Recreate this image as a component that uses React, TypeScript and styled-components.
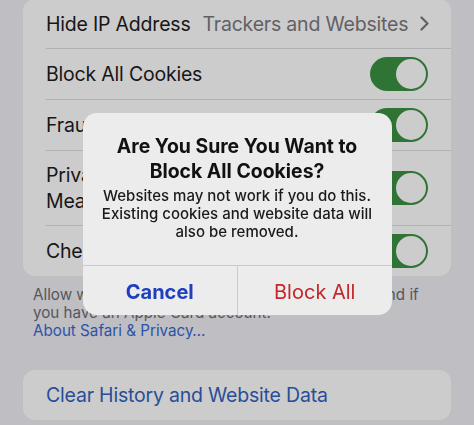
import React from 'react';
import styled, { createGlobalStyle } from 'styled-components';

const GlobalStyle = createGlobalStyle`
  body {
    margin: 0;
    background: #efeef4;
    font-family: Inter, "Liberation Sans", sans-serif;
    -webkit-font-smoothing: antialiased;
  }
`;

const Page = styled.div`
  height: 425px;
  padding: 0 23px;
  overflow: hidden;
`;

const Group = styled.div<{ $offset: number }>`
  margin-top: ${(p) => p.$offset}px;
  background: #ffffff;
  border-radius: 12px;
  overflow: hidden;
`;

const Row = styled.div`
  padding-left: 23px;
`;

const RowBody = styled.div<{ $last?: boolean; $tall?: boolean }>`
  display: flex;
  align-items: center;
  justify-content: space-between;
  gap: 12px;
  min-height: 50px;
  box-sizing: border-box;
  padding: ${(p) => (p.$tall ? '11px' : '8px')} 23px ${(p) => (p.$tall ? '11px' : '8px')} 0;
  border-bottom: ${(p) => (p.$last ? 'none' : '1px solid #dcdcdf')};
`;

const Label = styled.span<{ $tone?: 'link' }>`
  flex: none;
  font-size: 19.5px;
  line-height: 26px;
  letter-spacing: -0.2px;
  white-space: nowrap;
  color: ${(p) => (p.$tone === 'link' ? '#3462c0' : '#1c1c1e')};
`;

const Detail = styled.span`
  display: flex;
  align-items: center;
  gap: 12px;
  font-size: 19.5px;
  line-height: 26px;
  letter-spacing: -0.2px;
  color: #7a7a7e;
  white-space: nowrap;
`;

const Track = styled.span<{ $on: boolean }>`
  flex: none;
  display: flex;
  justify-content: ${(p) => (p.$on ? 'flex-end' : 'flex-start')};
  width: 58px;
  height: 34px;
  padding: 2px;
  box-sizing: border-box;
  border-radius: 17px;
  background: ${(p) => (p.$on ? '#3b9241' : '#e5e5ea')};
`;

const Knob = styled.span`
  width: 30px;
  height: 30px;
  border-radius: 50%;
  background: #ffffff;
`;

const Footer = styled.p`
  margin: 0;
  padding: 10px 10px 0;
  font-size: 15.2px;
  line-height: 18px;
  color: #6d6d72;
`;

const FooterLink = styled.span`
  display: block;
  color: #356ad2;
`;

const Backdrop = styled.div`
  position: fixed;
  inset: 0;
  display: flex;
  align-items: center;
  justify-content: center;
  padding-top: 3px;
  background: rgba(0, 0, 0, 0.2);
`;

const Alert = styled.div`
  width: 309px;
  border-radius: 14px;
  background: #ececec;
  overflow: hidden;
  text-align: center;
`;

const AlertContent = styled.div`
  padding: 21px 14px 24px;
`;

const AlertTitle = styled.h2`
  margin: 0;
  font-size: 19.4px;
  line-height: 25px;
  font-weight: 700;
  color: #111111;
`;

const AlertMessage = styled.p`
  margin: 3px 0 0;
  font-size: 15px;
  line-height: 18px;
  font-weight: 500;
  color: #1a1a1a;
`;

const Actions = styled.div`
  display: grid;
  grid-template-columns: 1fr 1fr;
  border-top: 1px solid #cacaca;
`;

const ActionButton = styled.button<{ $kind: 'cancel' | 'destructive' }>`
  height: 49px;
  padding: 2px 0 0;
  border: none;
  border-left: ${(p) => (p.$kind === 'destructive' ? '1px solid #cacaca' : 'none')};
  background: transparent;
  font-family: inherit;
  font-size: 20px;
  font-weight: ${(p) => (p.$kind === 'cancel' ? 700 : 400)};
  color: ${(p) => (p.$kind === 'cancel' ? '#1f3fbf' : '#c4262b')};
  cursor: pointer;
`;

const Chevron = () => (
  <svg width="9" height="15" viewBox="0 0 9 15" fill="none">
    <path d="M1.5 1.5l6 6-6 6" stroke="#7a7a7e" strokeWidth="2.2" strokeLinecap="round" strokeLinejoin="round" />
  </svg>
);

const Toggle: React.FC<{ on: boolean }> = ({ on }) => (
  <Track $on={on}>
    <Knob />
  </Track>
);

const toggles = [
  { label: ['Block All Cookies'], on: true },
  { label: ['Fraudulent Website Warning'], on: true },
  { label: ['Privacy Preserving Ad', 'Measurement'], on: true },
  { label: ['Check for Apple Pay'], on: true },
];

export default function App() {
  return (
    <>
      <GlobalStyle />
      <Page>
        <Group $offset={-1}>
          <Row>
            <RowBody>
              <Label>Hide IP Address</Label>
              <Detail>
                Trackers and Websites
                <Chevron />
              </Detail>
            </RowBody>
          </Row>
          {toggles.map((t, i) => (
            <Row key={t.label[0]}>
              <RowBody $last={i === toggles.length - 1} $tall={t.label.length > 1}>
                <Label>
                  {t.label.map((line, j) => (
                    <React.Fragment key={line}>
                      {j > 0 && <br />}
                      {line}
                    </React.Fragment>
                  ))}
                </Label>
                <Toggle on={t.on} />
              </RowBody>
            </Row>
          ))}
        </Group>
        <Footer>
          Allow websites to check if Apple Pay is enabled and if you have an Apple Card account.
          <FooterLink>About Safari &amp; Privacy…</FooterLink>
        </Footer>
        <Group $offset={30}>
          <Row>
            <RowBody $last>
              <Label $tone="link">Clear History and Website Data</Label>
            </RowBody>
          </Row>
        </Group>
      </Page>
      <Backdrop>
        <Alert role="alertdialog">
          <AlertContent>
            <AlertTitle>Are You Sure You Want to Block All Cookies?</AlertTitle>
            <AlertMessage>
              Websites may not work if you do this. Existing cookies and website data will also be
              removed.
            </AlertMessage>
          </AlertContent>
          <Actions>
            <ActionButton $kind="cancel">Cancel</ActionButton>
            <ActionButton $kind="destructive">Block All</ActionButton>
          </Actions>
        </Alert>
      </Backdrop>
    </>
  );
}
